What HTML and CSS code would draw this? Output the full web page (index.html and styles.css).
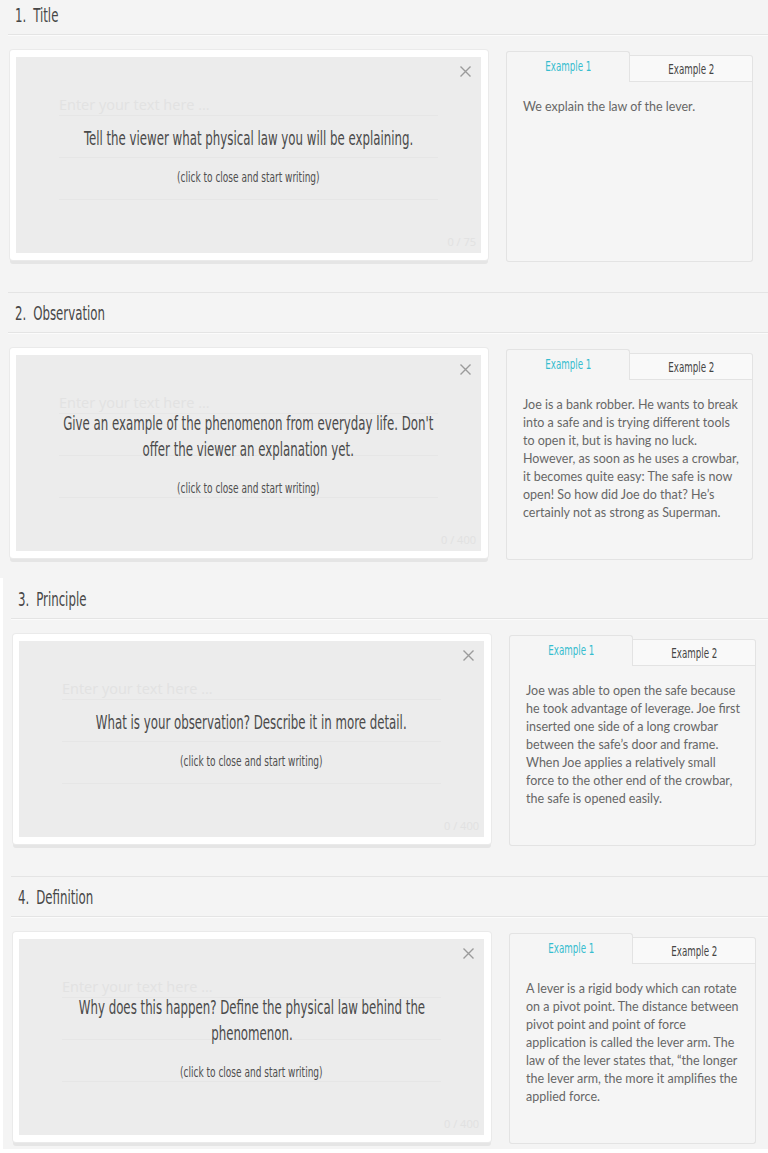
FILE: index.html
```html
<!DOCTYPE html>
<html lang="en">
<head>
<meta charset="utf-8">
<title>Storyboard steps</title>
<link rel="stylesheet" href="styles.css">
</head>
<body>
<div class="page">
  <section class="step">
    <h2 class="step-title"><span class="cond-left"><span class="num">1.</span>Title</span></h2>
    <div class="step-body">
      <div class="card">
        <div class="editor">
          <div class="lines">
            <div class="line first"><span class="placeholder">Enter your text here ...</span></div>
            <div class="line"></div>
            <div class="line"></div>
          </div>
          <span class="counter">0 / 75</span>
          <div class="hint">
            <p class="hint-main">Tell the viewer what physical law you will be explaining.</p>
            <p class="hint-sub">(click to close and start writing)</p>
          </div>
          <span class="close"><svg width="11" height="11" viewBox="0 0 11 11"><path d="M0.5 0.5L10.5 10.5M10.5 0.5L0.5 10.5" stroke="#9b9b9b" stroke-width="1.4" fill="none"/></svg></span>
        </div>
      </div>
      <div class="examples">
        <div class="tabs"><div class="tab active"><span class="cond">Example 1</span></div><div class="tab"><span class="cond">Example 2</span></div></div>
        <div class="example-body">We explain the law of the lever.</div>
      </div>
    </div>
  </section>

  <section class="step">
    <h2 class="step-title"><span class="cond-left"><span class="num">2.</span>Observation</span></h2>
    <div class="step-body">
      <div class="card">
        <div class="editor">
          <div class="lines">
            <div class="line first"><span class="placeholder">Enter your text here ...</span></div>
            <div class="line"></div>
            <div class="line"></div>
          </div>
          <span class="counter">0 / 400</span>
          <div class="hint">
            <p class="hint-main">Give an example of the phenomenon from everyday life. Don't<br>offer the viewer an explanation yet.</p>
            <p class="hint-sub">(click to close and start writing)</p>
          </div>
          <span class="close"><svg width="11" height="11" viewBox="0 0 11 11"><path d="M0.5 0.5L10.5 10.5M10.5 0.5L0.5 10.5" stroke="#9b9b9b" stroke-width="1.4" fill="none"/></svg></span>
        </div>
      </div>
      <div class="examples">
        <div class="tabs"><div class="tab active"><span class="cond">Example 1</span></div><div class="tab"><span class="cond">Example 2</span></div></div>
        <div class="example-body">Joe is a bank robber. He wants to break<br>into a safe and is trying different tools<br>to open it, but is having no luck.<br>However, as soon as he uses a crowbar,<br>it becomes quite easy: The safe is now<br>open! So how did Joe do that? He’s<br>certainly not as strong as Superman.</div>
      </div>
    </div>
  </section>
</div>

<div class="lower">
  <div class="lower-inner">
    <section class="step">
      <h2 class="step-title"><span class="cond-left"><span class="num">3.</span>Principle</span></h2>
      <div class="step-body">
        <div class="card">
          <div class="editor">
            <div class="lines">
              <div class="line first"><span class="placeholder">Enter your text here ...</span></div>
              <div class="line"></div>
              <div class="line"></div>
            </div>
            <span class="counter">0 / 400</span>
            <div class="hint">
              <p class="hint-main">What is your observation? Describe it in more detail.</p>
              <p class="hint-sub">(click to close and start writing)</p>
            </div>
            <span class="close"><svg width="11" height="11" viewBox="0 0 11 11"><path d="M0.5 0.5L10.5 10.5M10.5 0.5L0.5 10.5" stroke="#9b9b9b" stroke-width="1.4" fill="none"/></svg></span>
          </div>
        </div>
        <div class="examples">
          <div class="tabs"><div class="tab active"><span class="cond">Example 1</span></div><div class="tab"><span class="cond">Example 2</span></div></div>
          <div class="example-body">Joe was able to open the safe because<br>he took advantage of leverage. Joe first<br>inserted one side of a long crowbar<br>between the safe’s door and frame.<br>When Joe applies a relatively small<br>force to the other end of the crowbar,<br>the safe is opened easily.</div>
        </div>
      </div>
    </section>

    <section class="step">
      <h2 class="step-title"><span class="cond-left"><span class="num">4.</span>Definition</span></h2>
      <div class="step-body">
        <div class="card">
          <div class="editor">
            <div class="lines">
              <div class="line first"><span class="placeholder">Enter your text here ...</span></div>
              <div class="line"></div>
              <div class="line"></div>
            </div>
            <span class="counter">0 / 400</span>
            <div class="hint">
              <p class="hint-main">Why does this happen? Define the physical law behind the<br>phenomenon.</p>
              <p class="hint-sub">(click to close and start writing)</p>
            </div>
            <span class="close"><svg width="11" height="11" viewBox="0 0 11 11"><path d="M0.5 0.5L10.5 10.5M10.5 0.5L0.5 10.5" stroke="#9b9b9b" stroke-width="1.4" fill="none"/></svg></span>
          </div>
        </div>
        <div class="examples">
          <div class="tabs"><div class="tab active"><span class="cond">Example 1</span></div><div class="tab"><span class="cond">Example 2</span></div></div>
          <div class="example-body">A lever is a rigid body which can rotate<br>on a pivot point. The distance between<br>pivot point and point of force<br>application is called the lever arm. The<br>law of the lever states that, “the longer<br>the lever arm, the more it amplifies the<br>applied force.</div>
        </div>
      </div>
    </section>
  </div>
</div>
</body>
</html>
```

FILE: styles.css
```css
html, body {
  margin: 0;
  padding: 0;
}
body {
  background: #ffffff;
  width: 768px;
  overflow: hidden;
  font-family: "Lato", "Open Sans", sans-serif;
}
.page {
  display: flow-root;
  background: #f4f4f4;
  margin-top: -6px;
}
.lower {
  display: flow-root;
  background: #ffffff;
  padding-left: 3px;
  margin-top: -12px;
  position: relative;
}
.lower-inner {
  display: flow-root;
  background: #f4f4f4;
}
.lower-inner .step:first-child {
  border-top-color: transparent;
}
.lower-inner .step:last-child {
  margin-bottom: 5px;
}

/* condensed display text (narrow face emulated by horizontal compression) */
.cond,
.cond-left {
  display: inline-block;
  transform: scaleX(0.69);
  transform-origin: center;
  white-space: nowrap;
}
.cond-left {
  transform-origin: left center;
}

.step {
  margin: 0 0 30px 8px;
  border-top: 1px solid #e4e4e4;
}
.step-title {
  margin: 0;
  height: 39px;
  border-bottom: 1px solid #e4e4e4;
  box-shadow: 0 1px 0 #fbfbfb;
  display: flex;
  align-items: center;
  padding-left: 7px;
  font-family: "DejaVu Sans Condensed", "DejaVu Sans", sans-serif;
  font-weight: normal;
  font-size: 19px;
  color: #474747;
}
.num {
  margin-right: 10px;
}
.step-body {
  display: grid;
  grid-template-columns: 478px 247px;
  column-gap: 18px;
  align-items: start;
  padding: 15px 0 0 2px;
}

.card {
  background: #ffffff;
  height: 210px;
  box-sizing: border-box;
  padding: 7px 7px 7px 6px;
  border-radius: 3px;
  box-shadow: 0 0 0 1px #eaeaea, 0 4px 0 #e5e5e5;
}
.editor {
  position: relative;
  height: 196px;
  background: #ececec;
  box-sizing: border-box;
  padding: 17px 43px 0 43px;
}
.lines {
  display: flex;
  flex-direction: column;
}
.line {
  height: 41px;
  border-bottom: 1px solid #e6e6e6;
  display: flex;
  align-items: flex-end;
}
.placeholder {
  font-family: "Open Sans", sans-serif;
  font-size: 14.5px;
  line-height: 20px;
  color: #e2e2e2;
}
.counter {
  position: absolute;
  right: 5px;
  bottom: 4px;
  font-family: "Open Sans", sans-serif;
  font-size: 11px;
  color: #e1e1e1;
}
.hint {
  position: absolute;
  inset: 0;
  display: flex;
  flex-direction: column;
  align-items: center;
  justify-content: center;
  text-align: center;
  font-family: "DejaVu Sans Condensed", "DejaVu Sans", sans-serif;
}
.hint-main {
  margin: 0;
  font-size: 19px;
  line-height: 26px;
  color: #4a4a4a;
  white-space: nowrap;
  transform: scaleX(0.69);
}
.hint-sub {
  margin: 17px 0 0;
  font-size: 14.5px;
  line-height: 18px;
  color: #4f4f4f;
  white-space: nowrap;
  transform: scaleX(0.69);
}
.close {
  position: absolute;
  top: 9px;
  right: 10px;
  display: block;
  width: 11px;
  height: 11px;
}
.close svg {
  display: block;
}

.examples {
  margin-top: 1px;
  height: 211px;
  display: flex;
  flex-direction: column;
}
.tabs {
  display: flex;
  height: 31px;
}
.tab {
  flex: 1 1 0;
  box-sizing: border-box;
  display: flex;
  align-items: center;
  justify-content: center;
  font-family: "DejaVu Sans Condensed", "DejaVu Sans", sans-serif;
  font-size: 14px;
  color: #454545;
  background: #f9f9f9;
  margin-top: 4px;
  border-top: 1px solid #e3e3e3;
  border-right: 1px solid #e3e3e3;
  border-bottom: 1px solid #e3e3e3;
  border-top-right-radius: 3px;
}
.tab.active {
  margin-top: 0;
  padding-bottom: 2px;
  color: #36bdcf;
  background: #f5f5f5;
  border-left: 1px solid #e3e3e3;
  border-bottom: none;
  border-radius: 3px 3px 0 0;
}
.example-body {
  flex: 1;
  background: #f5f5f5;
  border: 1px solid #e3e3e3;
  border-top: none;
  border-radius: 0 0 3px 3px;
  padding: 16px 6px 10px 16px;
  font-size: 12.5px;
  line-height: 18px;
  color: #676767;
  white-space: nowrap;
}
```
